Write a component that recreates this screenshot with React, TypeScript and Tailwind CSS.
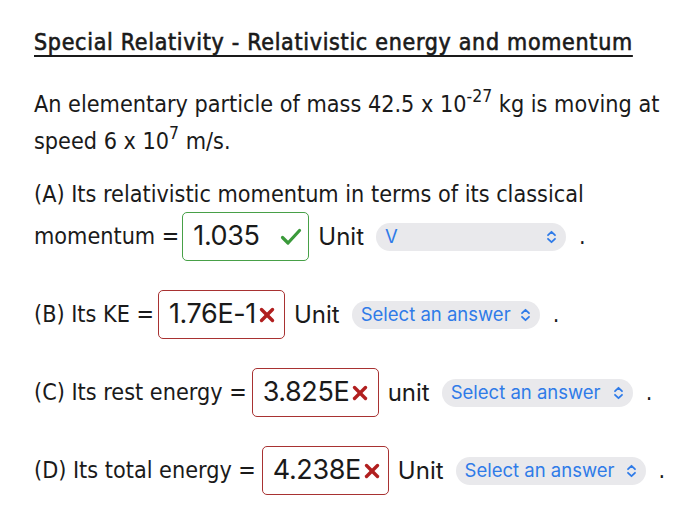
import React from "react";

const Chev = () => (
  <svg width="11" height="14" viewBox="0 0 11 14" fill="none" stroke="#2f7be8" strokeWidth="1.8" strokeLinecap="round" strokeLinejoin="round">
    <path d="M2 5.2 L5.5 1.8 L9 5.2" />
    <path d="M2 8.8 L5.5 12.2 L9 8.8" />
  </svg>
);

const Check = () => (
  <svg width="22" height="18" viewBox="0 0 22 18" fill="none" stroke="#3b9a3b" strokeWidth="3.2" strokeLinecap="round" strokeLinejoin="round">
    <path d="M2.5 9.5 L8 15 L19.5 2.5" />
  </svg>
);

const Cross = () => (
  <svg width="16" height="16" viewBox="0 0 16 16" fill="none" stroke="#b11f1f" strokeWidth="3.4" strokeLinecap="round">
    <path d="M2.5 2.5 L13.5 13.5" />
    <path d="M13.5 2.5 L2.5 13.5" />
  </svg>
);

function Box({ value, ok }: { value: string; ok?: boolean }) {
  return (
    <div
      className={
        "flex h-[49px] w-[127px] shrink-0 items-center overflow-hidden rounded-[5px] border-[1.6px] pl-[10px] pr-[4px] font-['Inter','Liberation_Sans',sans-serif] [font-stretch:normal] text-[27px] tracking-[-0.4px] text-[#1a1a1a] " +
        (ok ? "border-[#47a047]" : "border-[#a83232]")
      }
    >
      <span className="whitespace-nowrap">{value}</span>
      <span className={ok ? "ml-auto mr-[2px] flex" : "ml-[3px] flex"}>{ok ? <Check /> : <Cross />}</span>
    </div>
  );
}

function Sel({ label, w }: { label: string; w: string }) {
  return (
    <div
      className={
        "flex h-[28px] shrink-0 items-center justify-between rounded-full bg-[#e9e9ec] pl-[9px] pr-[9px] font-['Inter','Liberation_Sans',sans-serif] [font-stretch:normal] text-[18.5px] text-[#2f7be8] " +
        w
      }
    >
      <span className="whitespace-nowrap">{label}</span>
      <Chev />
    </div>
  );
}

function UnitWord({ t }: { t: string }) {
  return <span className="ml-[9px] font-['Inter','Liberation_Sans',sans-serif] [font-stretch:normal] text-[24px] text-[#1a1a1a]">{t}</span>;
}

function Row({
  label,
  value,
  ok,
  unit,
  sel,
  selW,
  gap,
}: {
  label: string;
  value: string;
  ok?: boolean;
  unit: string;
  sel: string;
  selW: string;
  gap: string;
}) {
  return (
    <div className="flex items-center">
      <span className={"whitespace-nowrap " + gap}>{label}</span>
      <Box value={value} ok={ok} />
      <UnitWord t={unit} />
      <span className="ml-[12px] flex">
        <Sel label={sel} w={selW} />
      </span>
      <span className="ml-[13px]">.</span>
    </div>
  );
}

export default function App() {
  return (
    <div className="h-[526px] w-[700px] bg-white pl-[34px] pt-[26px] font-['DejaVu_Sans',sans-serif] [font-stretch:condensed] text-[23.2px] text-[#1a1a1a]">
      <h1 className="whitespace-nowrap text-[23px] leading-[32px] tracking-[0.7px] underline decoration-[1.5px] underline-offset-[5px] [-webkit-text-stroke:0.6px_#1a1a1a]">
        Special Relativity - Relativistic energy and momentum
      </h1>
      <p className="mt-[27px] leading-[37px]">
        An elementary particle of mass 42.5 x 10
        <span className="relative top-[-10px] text-[17.5px] leading-none">-27</span> kg is moving at
        <br />
        speed 6 x 10<span className="relative top-[-10px] text-[17.5px] leading-none">7</span> m/s.
      </p>
      <div className="mt-[16px] leading-[37px]">(A) Its relativistic momentum in terms of its classical</div>
      <div className="mt-[0px]">
        <Row label="momentum =" value="1.035" ok unit="Unit" sel="V" selW="w-[190px]" gap="mr-[3px]" />
      </div>
      <div className="mt-[29px]">
        <Row label="(B) Its KE =" value="1.76E-1" unit="Unit" sel="Select an answer" selW="w-[188px]" gap="mr-[4px]" />
      </div>
      <div className="mt-[29px]">
        <Row label="(C) Its rest energy =" value="3.825E" unit="unit" sel="Select an answer" selW="w-[191px]" gap="mr-[5px]" />
      </div>
      <div className="mt-[29px]">
        <Row label="(D) Its total energy =" value="4.238E" unit="Unit" sel="Select an answer" selW="w-[190px]" gap="mr-[6px]" />
      </div>
    </div>
  );
}
